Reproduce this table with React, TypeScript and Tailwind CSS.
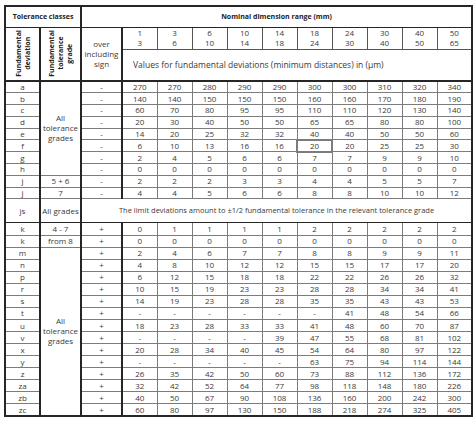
const ranges: [string, string][] = [
  ["1", "3"],
  ["3", "6"],
  ["6", "10"],
  ["10", "14"],
  ["14", "18"],
  ["18", "24"],
  ["24", "30"],
  ["30", "40"],
  ["40", "50"],
  ["50", "65"],
];

type Row = {
  dev: string;
  grade?: { text: string[]; span: number };
  sign: string;
  vals: string[];
};

const sp = (s: string) => s.split(" ");

const upper: Row[] = [
  { dev: "a", grade: { text: ["All", "tolerance", "grades"], span: 8 }, sign: "-", vals: sp("270 270 280 290 290 300 300 310 320 340") },
  { dev: "b", sign: "-", vals: sp("140 140 150 150 150 160 160 170 180 190") },
  { dev: "c", sign: "-", vals: sp("60 70 80 95 95 110 110 120 130 140") },
  { dev: "d", sign: "-", vals: sp("20 30 40 50 50 65 65 80 80 100") },
  { dev: "e", sign: "-", vals: sp("14 20 25 32 32 40 40 50 50 60") },
  { dev: "f", sign: "-", vals: sp("6 10 13 16 16 20 20 25 25 30") },
  { dev: "g", sign: "-", vals: sp("2 4 5 6 6 7 7 9 9 10") },
  { dev: "h", sign: "-", vals: sp("0 0 0 0 0 0 0 0 0 0") },
  { dev: "j", grade: { text: ["5 + 6"], span: 1 }, sign: "-", vals: sp("2 2 2 3 3 4 4 5 5 7") },
  { dev: "j", grade: { text: ["7"], span: 1 }, sign: "-", vals: sp("4 4 5 6 6 8 8 10 10 12") },
];

const lower: Row[] = [
  { dev: "k", grade: { text: ["4 - 7"], span: 1 }, sign: "+", vals: sp("0 1 1 1 1 2 2 2 2 2") },
  { dev: "k", grade: { text: ["from 8"], span: 1 }, sign: "+", vals: sp("0 0 0 0 0 0 0 0 0 0") },
  { dev: "m", grade: { text: ["All", "tolerance", "grades"], span: 14 }, sign: "+", vals: sp("2 4 6 7 7 8 8 9 9 11") },
  { dev: "n", sign: "+", vals: sp("4 8 10 12 12 15 15 17 17 20") },
  { dev: "p", sign: "+", vals: sp("6 12 15 18 18 22 22 26 26 32") },
  { dev: "r", sign: "+", vals: sp("10 15 19 23 23 28 28 34 34 41") },
  { dev: "s", sign: "+", vals: sp("14 19 23 28 28 35 35 43 43 53") },
  { dev: "t", sign: "+", vals: sp("- - - - - - 41 48 54 66") },
  { dev: "u", sign: "+", vals: sp("18 23 28 33 33 41 48 60 70 87") },
  { dev: "v", sign: "+", vals: sp("- - - - 39 47 55 68 81 102") },
  { dev: "x", sign: "+", vals: sp("20 28 34 40 45 54 64 80 97 122") },
  { dev: "y", sign: "+", vals: sp("- - - - - 63 75 94 114 144") },
  { dev: "z", sign: "+", vals: sp("26 35 42 50 60 73 88 112 136 172") },
  { dev: "za", sign: "+", vals: sp("32 42 52 64 77 98 118 148 180 226") },
  { dev: "zb", sign: "+", vals: sp("40 50 67 90 108 136 160 200 242 300") },
  { dev: "zc", sign: "+", vals: sp("60 80 97 130 150 188 218 274 325 405") },
];

const grid = "border border-[#7c7c7c] p-0 text-center align-middle";
const thick = "border-r-2 border-r-[#262626]";

function DataRow({ row, h, hl }: { row: Row; h: string; hl?: number }) {
  return (
    <tr className={h}>
      <td className={`${grid} ${thick}`}>{row.dev}</td>
      {row.grade && (
        <td rowSpan={row.grade.span} className={`${grid} ${thick} leading-[10px]`}>
          {row.grade.text.map((t) => (
            <div key={t}>{t}</div>
          ))}
        </td>
      )}
      <td className={`${grid} ${thick}`}>{row.sign}</td>
      {row.vals.map((v, i) => (
        <td key={i} className={`${grid} ${i === hl ? "border-2 border-[#4a4a4a]" : ""}`}>
          {v}
        </td>
      ))}
    </tr>
  );
}

export default function App() {
  return (
    <div className="w-[474px] h-[421px] bg-white pl-[4px] pt-[5px]">
      <table
        className="w-[468px] table-fixed border-collapse border-2 border-[#262626] text-[8px] leading-none text-[#3a3a3a]"
        style={{ fontFamily: '"Open Sans", "Noto Sans", sans-serif' }}
      >
        <colgroup>
          <col className="w-[35px]" />
          <col className="w-[41px]" />
          <col className="w-[41px]" />
          {ranges.map((r) => (
            <col key={r[0]} className="w-[35px]" />
          ))}
        </colgroup>
        <thead>
          <tr className="h-[21px]">
            <th colSpan={2} className="border-r-2 border-r-[#262626] border-b border-b-[#262626] p-0 text-[7px] font-bold text-[#222]">
              Tolerance classes
            </th>
            <th colSpan={11} className="border-b border-b-[#262626] p-0 text-[7px] font-bold text-[#222]">
              Nominal dimension range (mm)
            </th>
          </tr>
          <tr className="h-[22px]">
            <th rowSpan={2} className={`${thick} border-b-2 border-b-[#262626] p-0 text-center text-[7px] font-bold text-[#222]`}>
              <div className="inline-block align-middle [writing-mode:vertical-rl] rotate-180 text-center leading-[9px]">
                Fundamental
                <br />
                deviation
              </div>
            </th>
            <th rowSpan={2} className={`${thick} border-b-2 border-b-[#262626] p-0 text-center text-[7px] font-bold text-[#222]`}>
              <div className="inline-block align-middle [writing-mode:vertical-rl] rotate-180 text-center leading-[9px]">
                Fundamental
                <br />
                tolerance
                <br />
                grade
              </div>
            </th>
            <th rowSpan={2} className={`${thick} border-b-2 border-b-[#262626] p-0 font-normal leading-[10px]`}>
              over
              <br />
              including
              <br />
              sign
            </th>
            {ranges.map((r) => (
              <th key={r[0]} className="border border-[#555] p-0 font-normal leading-[10px]">
                {r[0]}
                <br />
                {r[1]}
              </th>
            ))}
          </tr>
          <tr className="h-[32px]">
            <th colSpan={10} className="border-b-2 border-b-[#262626] p-0 pl-[10px] text-left text-[8.5px] font-normal">
              Values for fundamental deviations (minimum distances) in (µm)
            </th>
          </tr>
        </thead>
        <tbody>
          {upper.map((row, i) => (
            <DataRow key={i} row={row} h="h-[11.8px]" hl={row.dev === "f" ? 5 : undefined} />
          ))}
          <tr className="h-[24px]">
            <td className={`${thick} border-y border-y-[#262626] p-0 text-center`}>js</td>
            <td className={`${thick} border-y border-y-[#262626] p-0 text-center`}>All grades</td>
            <td colSpan={11} className="border-y border-y-[#262626] p-0 text-center text-[7.5px]">
              The limit deviations amount to ±1/2 fundamental tolerance in the relevant tolerance grade
            </td>
          </tr>
          {lower.map((row, i) => (
            <DataRow key={i} row={row} h="h-[12.07px]" />
          ))}
        </tbody>
      </table>
    </div>
  );
}
